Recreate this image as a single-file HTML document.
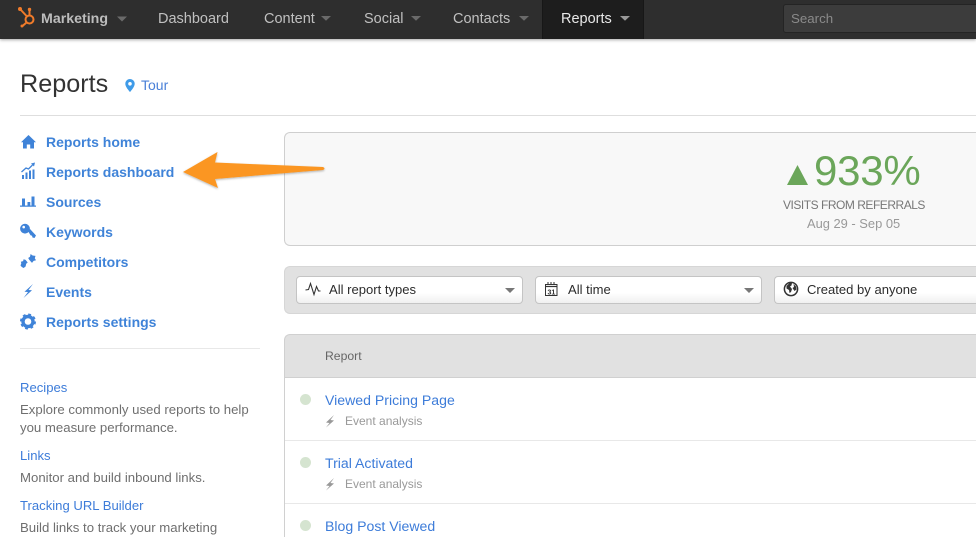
<!DOCTYPE html>
<html><head><meta charset="utf-8">
<style>
html,body{margin:0;padding:0;background:#fff;overflow:hidden}
#p{position:relative;width:976px;height:537px;overflow:hidden;background:#fff;font-family:"Liberation Sans",sans-serif}
.t{position:absolute;white-space:nowrap;line-height:18px;height:18px}
.n{top:10px;font-size:14.5px;color:#c0c0c0}
.s{font-size:14px;font-weight:bold;color:#3f83d8}
.a{font-size:13.1px;color:#3d7cd9}
.g{font-size:13.2px;color:#6f6f6f}
.l{font-size:14.1px;color:#3d7cd9}
.e{font-size:12px;color:#999}
.f{font-size:13.05px;color:#2c2c2c}
.box{position:absolute;box-sizing:border-box}
.dd{position:absolute;top:276px;height:28px;box-sizing:border-box;border:1px solid #c4c4c4;border-radius:4px;background:linear-gradient(#fff,#fff 60%,#f0f0f0)}
.dot{position:absolute;left:300px;width:11px;height:11px;border-radius:50%;background:#d5e4d0}
svg{position:absolute;overflow:visible}
</style></head><body><div id="p">
<!-- nav -->
<div class="box" style="left:0;top:0;width:976px;height:39px;background:#2e2e2e;box-shadow:0 1px 3px rgba(0,0,0,.35)"></div>
<div class="box" style="left:542px;top:0;width:102px;height:39px;background:#1d1d1d;border-left:1px solid #171717;border-right:1px solid #171717"></div>
<div class="box" style="left:783px;top:4px;width:193px;height:29px;background:#3c3c3c;border:1px solid #242424;border-right:0;border-radius:3px 0 0 3px"></div>
<svg style="left:18px;top:7px" width="18" height="20" viewBox="0 0 18 20"><g fill="none" stroke="#f07b2a" stroke-width="2"><circle cx="11.5" cy="12.5" r="4"/><path d="M2.5 2.5L9 9.5M11.5 8.5V3.500M8.500 15.500L4.500 19"/></g><circle cx="2" cy="2" r="2" fill="#f07b2a"/><circle cx="11.5" cy="2.500" r="1.700" fill="#f07b2a"/><circle cx="4" cy="19" r="1.500" fill="#f07b2a"/></svg>
<div class="t n" style="left:41px;font-size:14.2px;font-weight:bold;color:#bdbdbd">Marketing</div>
<div class="t n" style="left:158px">Dashboard</div>
<div class="t n" style="left:264px">Content</div>
<div class="t n" style="left:364px">Social</div>
<div class="t n" style="left:453px">Contacts</div>
<div class="t n" style="left:561px;color:#e8e8e8">Reports</div>
<svg style="left:0;top:0" width="976" height="39"><g fill="#6a6a6a"><path d="M117 16.500h10l-5 5zM321 16h10l-5 4.700zM411 16h10l-5 4.700zM519 16h10l-5 4.700z"/><path d="M620 16h10l-5 4.700z" fill="#999"/></g></svg>
<div class="t" style="left:791px;top:10px;font-size:13.3px;color:#8a8a8a">Search</div>
<!-- header -->
<div class="t" style="left:20px;top:69px;font-size:25.2px;line-height:30px;height:30px;color:#333">Reports</div>
<svg style="left:125px;top:79px" width="10" height="13" viewBox="0 0 10 13"><path fill-rule="evenodd" fill="#3f9be8" d="M5 0a4.700 4.700 0 0 1 4.700 4.700C9.700 8 5 13 5 13S.3 8 .3 4.700A4.700 4.700 0 0 1 5 0zm0 3a1.800 1.800 0 1 0 0 3.600A1.800 1.800 0 0 0 5 3z"/></svg>
<div class="t" style="left:141px;top:76px;font-size:14px;color:#4a80d8">Tour</div>
<div class="box" style="left:20px;top:115px;width:956px;height:1px;background:#dedede"></div>
<!-- side menu -->
<div class="t s" style="left:46px;top:133px">Reports home</div>
<div class="t s" style="left:46px;top:163px">Reports dashboard</div>
<div class="t s" style="left:46px;top:193px">Sources</div>
<div class="t s" style="left:46px;top:223px">Keywords</div>
<div class="t s" style="left:46px;top:253px">Competitors</div>
<div class="t s" style="left:46px;top:283px">Events</div>
<div class="t s" style="left:46px;top:313px">Reports settings</div>
<svg style="left:0;top:0" width="60" height="340"><g fill="#3f83d8">
<path d="M28.500 135l7.500 7.300h-2V148.500h-3.800v-4h-3.400v4H23v-6.200h-2z"/>
<path d="M22 175h2v4h-2zM25.500 172.500h2v6.500h-2zM29 170.500h2v8.500h-2zM32.500 169.500h2v9.500h-2z"/>
<path d="M21.500 172l4.500-4 2.500 1 4-4" fill="none" stroke="#3f83d8" stroke-width="1.300"/><path d="M31 163.500l4-1-1 4z"/>
<path d="M20 205.500h16v1.200H20zM22 198.500h3v7h-3zM27.500 202h2.800v3.500h-2.800zM31.500 196.500h3v9h-3z"/>
<path fill-rule="evenodd" d="M25 223.800a4.900 4.900 0 1 1 0 9.800 4.900 4.900 0 0 1 0-9.800zm-1.300 2a1.300 1.300 0 1 0 0 2.600 1.300 1.300 0 0 0 0-2.600z"/><path d="M28 231l2-2 6 6.500-1.500 2.500-2-.5-.5-1.800-1.500-.5z"/>
<path d="M28.200 258l1.800-1.300.6-2.700 2 1.500 2.900.4-.7 2.300 1.200 2-2.400.7-1.600 2-1.600-1.800-1.200-1.300zM27.700 262.500l-1.500 1.200-.6 2.800-2 1.500-1.800-1-1.300-1.500.8-2.300-.5-1.500 2.300-.6.500-1.800 2 .6z"/>
<path d="M33 284l-8.500 7.800 3.500.2-4.500 6 8.500-7.800-3.500-.2z"/>
</g>
<circle cx="28" cy="321.500" r="5" fill="none" stroke="#3f83d8" stroke-width="3.400"/>
<circle cx="28" cy="321.500" r="6.800" fill="none" stroke="#3f83d8" stroke-width="2.400" stroke-dasharray="2.700 2.640"/>
</svg>
<div class="box" style="left:20px;top:348px;width:240px;height:1px;background:#e8e8e8"></div>
<div class="t a" style="left:20px;top:379px">Recipes</div>
<div class="t g" style="left:20px;top:401px">Explore commonly used reports to help</div>
<div class="t g" style="left:20px;top:419px">you measure performance.</div>
<div class="t a" style="left:20px;top:447px">Links</div>
<div class="t g" style="left:20px;top:469px">Monitor and build inbound links.</div>
<div class="t a" style="left:20px;top:497px">Tracking URL Builder</div>
<div class="t g" style="left:20px;top:519px">Build links to track your marketing</div>
<!-- stat box -->
<div class="box" style="left:284px;top:132px;width:692px;height:114px;background:#f8f8f8;border:1px solid #cfcfcf;border-right:0;border-radius:6px 0 0 6px"></div>
<svg style="left:787px;top:165px" width="21" height="20"><path d="M10.500 0L21 20H0z" fill="#6ba65a"/></svg>
<div class="t" style="left:814px;top:147px;font-size:42px;line-height:48px;height:48px;letter-spacing:-.25px;color:#6ba65a">933%</div>
<div class="t" style="left:783px;top:196px;font-size:12px;letter-spacing:-.48px;color:#777">VISITS FROM REFERRALS</div>
<div class="t" style="left:807px;top:215px;font-size:12.9px;color:#999">Aug 29 - Sep 05</div>
<!-- filters -->
<div class="box" style="left:284px;top:266px;width:692px;height:48px;background:#e1e1e1;border:1px solid #d6d6d6;border-right:0;border-radius:6px 0 0 6px"></div>
<div class="dd" style="left:296px;width:227px"></div>
<div class="dd" style="left:535px;width:227px"></div>
<div class="dd" style="left:774px;width:202px;border-right:0;border-radius:4px 0 0 4px"></div>
<svg style="left:0;top:0" width="976" height="320">
<path d="M305.500 290l3-.5 2-6 3.500 11 2.500-8 2 4.500 2 0" fill="none" stroke="#333" stroke-width="1.100"/>
<path d="M505 288h10l-5 5zM744 288h10l-5 5z" fill="#777"/>
<g fill="none" stroke="#333"><rect x="545.500" y="284.500" width="11.500" height="11"/><path d="M548 282v3M551 282v3M554 282v3"/><path d="M545.500 286.500h11.500" stroke-width="1.200"/></g>
<text x="547.500" y="294.500" font-family="Liberation Sans" font-size="7" font-weight="bold" fill="#333">31</text>
<circle cx="791" cy="289" r="6.600" fill="#fff" stroke="#333" stroke-width="1.500"/><path d="M786.500 286l3-3 2.500 0-.5 2.500-1.500 1 2 2.500-1 3-1.500 1-.5-3-2.500-1.500zM793.500 284l2.500 2.500.5 3-2 1.500-2-3 1.500-1z" fill="#333"/>
</svg>
<div class="t f" style="left:329px;top:281px">All report types</div>
<div class="t f" style="left:568px;top:281px">All time</div>
<div class="t f" style="left:807px;top:281px">Created by anyone</div>
<!-- table -->
<div class="box" style="left:284px;top:340px;width:692px;height:197px;border-left:1px solid #d0d0d0"></div>
<div class="box" style="left:284px;top:334px;width:692px;height:44px;background:#e1e1e1;border:1px solid #d0d0d0;border-right:0;border-radius:6px 0 0 0"></div>
<div class="t" style="left:325px;top:347px;font-size:12.2px;color:#666">Report</div>
<div class="box" style="left:285px;top:440px;width:691px;height:1px;background:#e8e8e8"></div>
<div class="box" style="left:285px;top:503px;width:691px;height:1px;background:#e8e8e8"></div>
<div class="dot" style="top:394px"></div>
<div class="dot" style="top:457px"></div>
<div class="dot" style="top:520px"></div>
<div class="t l" style="left:325px;top:391px">Viewed Pricing Page</div>
<div class="t l" style="left:325px;top:454px">Trial Activated</div>
<div class="t l" style="left:325px;top:517px">Blog Post Viewed</div>
<div class="t e" style="left:345px;top:412px">Event analysis</div>
<div class="t e" style="left:345px;top:475px">Event analysis</div>
<svg style="left:0;top:400px" width="340" height="100"><g fill="#999"><path d="M334 15l-8 7.500 3.500.5-3.500 4.500 8-7-3.500-.5z"/><path d="M334 78l-8 7.500 3.500.5-3.500 4.500 8-7-3.500-.5z"/></g></svg>
<!-- arrow -->
<svg style="left:0;top:0" width="340" height="200"><defs><filter id="sh" x="-10%" y="-20%" width="120%" height="150%"><feDropShadow dx="0" dy="1" stdDeviation="1" flood-color="#000" flood-opacity=".3"/></filter></defs><path d="M183 172L217.500 152 215 162.500 323 167Q326 168.500 323 170L215 179 218 188z" fill="#fb9620" filter="url(#sh)"/></svg>
</div></body></html>
